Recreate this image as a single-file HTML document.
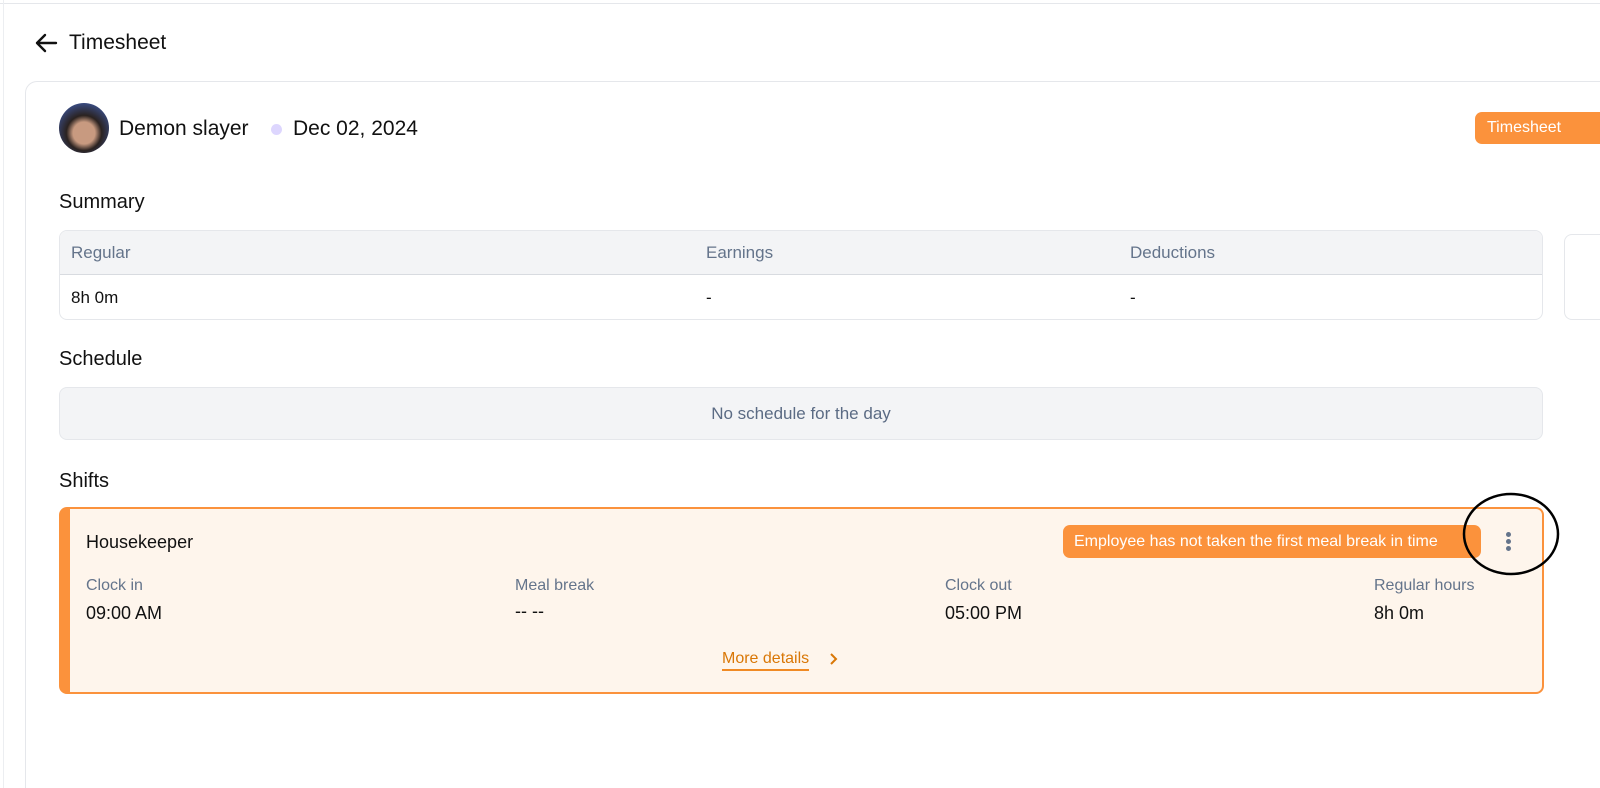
<!DOCTYPE html>
<html><head><meta charset="utf-8"><style>
*{box-sizing:border-box;margin:0;padding:0}
html,body{width:1600px;height:788px;overflow:hidden}
body{background:#fff;font-family:"Liberation Sans",sans-serif;color:#111}
#w{position:relative;width:1600px;height:788px;overflow:hidden}
.a{position:absolute}
.lbl{color:#64748b;font-size:16px}
.val{font-size:18px;color:#111}
</style></head><body><div id="w">
<div class="a" style="left:0;top:3px;width:1600px;height:1px;background:#e5e7eb"></div>
<div class="a" style="left:3px;top:0;width:1px;height:788px;background:#eceef1"></div>
<svg class="a" style="left:34px;top:32px" width="24" height="22" viewBox="0 0 24 22"><path d="M22 11H3M11 3L3 11l8 8" fill="none" stroke="#111" stroke-width="2.4" stroke-linecap="round" stroke-linejoin="round"/></svg>
<div class="a" style="left:69px;top:31px;font-size:21px">Timesheet</div>
<div class="a" style="left:25px;top:81px;width:1575px;height:707px;border:1px solid #e5e7eb;border-right:none;border-bottom:none;border-radius:12px 0 0 0"></div>
<div class="a" style="left:59px;top:103px;width:50px;height:50px;border-radius:50%;background:radial-gradient(circle at 50% 60%,#c89a80 0 28%,#2a2220 45%,#3b4f8a 80%)"></div>
<div class="a" style="left:119px;top:117px;font-size:21px">Demon slayer</div>
<div class="a" style="left:271px;top:124px;width:11px;height:11px;border-radius:50%;background:#ddd6fe"></div>
<div class="a" style="left:293px;top:117px;font-size:21px">Dec 02, 2024</div>
<div class="a" style="left:1475px;top:112px;width:125px;height:32px;border-radius:7px 0 0 7px;background:#fb923c;color:#fff;font-size:16px;padding:7px 0 0 12px">Timesheet</div>
<div class="a" style="left:59px;top:191px;font-size:20px">Summary</div>
<div class="a" style="left:59px;top:230px;width:1484px;height:90px;border:1px solid #e5e7eb;border-radius:8px;overflow:hidden">
<div style="height:44px;background:#f3f4f6;border-bottom:1px solid #d8dbe0"></div></div>
<div class="a lbl" style="left:71px;top:243px;font-size:17px">Regular</div>
<div class="a lbl" style="left:706px;top:243px;font-size:17px">Earnings</div>
<div class="a lbl" style="left:1130px;top:243px;font-size:17px">Deductions</div>
<div class="a" style="left:71px;top:288px;font-size:17px">8h 0m</div>
<div class="a" style="left:706px;top:288px;font-size:17px">-</div>
<div class="a" style="left:1130px;top:288px;font-size:17px">-</div>
<div class="a" style="left:1564px;top:234px;width:36px;height:86px;border:1px solid #e5e7eb;border-right:none;border-radius:8px 0 0 8px"></div>
<div class="a" style="left:59px;top:348px;font-size:20px">Schedule</div>
<div class="a" style="left:59px;top:387px;width:1484px;height:53px;border:1px solid #e5e7eb;border-radius:8px;background:#f3f4f6;text-align:center;line-height:51px;color:#5b6b84;font-size:17px">No schedule for the day</div>
<div class="a" style="left:59px;top:470px;font-size:20px">Shifts</div>
<div class="a" style="left:59px;top:507px;width:1485px;height:187px;border:2px solid #fb923c;border-left:11px solid #fb923c;border-radius:8px;background:#fef5ec"></div>
<div class="a" style="left:86px;top:532px;font-size:18px">Housekeeper</div>
<div class="a" style="left:1063px;top:525px;width:418px;height:33px;border-radius:7px;background:#fb923c;color:#fff;font-size:16px;line-height:33px;padding-left:11px;white-space:nowrap;overflow:hidden">Employee has not taken the first meal break in time</div>
<div class="a" style="left:1506px;top:532px;width:5px;height:5px;border-radius:50%;background:#64748b"></div>
<div class="a" style="left:1506px;top:539px;width:5px;height:5px;border-radius:50%;background:#64748b"></div>
<div class="a" style="left:1506px;top:546px;width:5px;height:5px;border-radius:50%;background:#64748b"></div>
<svg class="a" style="left:1460px;top:490px" width="104" height="88"><ellipse cx="51" cy="44" rx="47" ry="40" fill="none" stroke="#000" stroke-width="2.5"/></svg>
<div class="a lbl" style="left:86px;top:577px">Clock in</div>
<div class="a val" style="left:86px;top:603px">09:00 AM</div>
<div class="a lbl" style="left:515px;top:577px">Meal break</div>
<div class="a val" style="left:515px;top:601px">-- --</div>
<div class="a lbl" style="left:945px;top:577px">Clock out</div>
<div class="a val" style="left:945px;top:603px">05:00 PM</div>
<div class="a lbl" style="left:1374px;top:577px">Regular hours</div>
<div class="a val" style="left:1374px;top:603px">8h 0m</div>
<div class="a" style="left:722px;top:650px;font-size:16px;color:#d97706;border-bottom:2px solid #f08a24;padding-bottom:1px">More details</div>
<svg class="a" style="left:828px;top:652px" width="12" height="14"><path d="M3 2l5 5-5 5" fill="none" stroke="#d97706" stroke-width="2"/></svg>
</div></body></html>
